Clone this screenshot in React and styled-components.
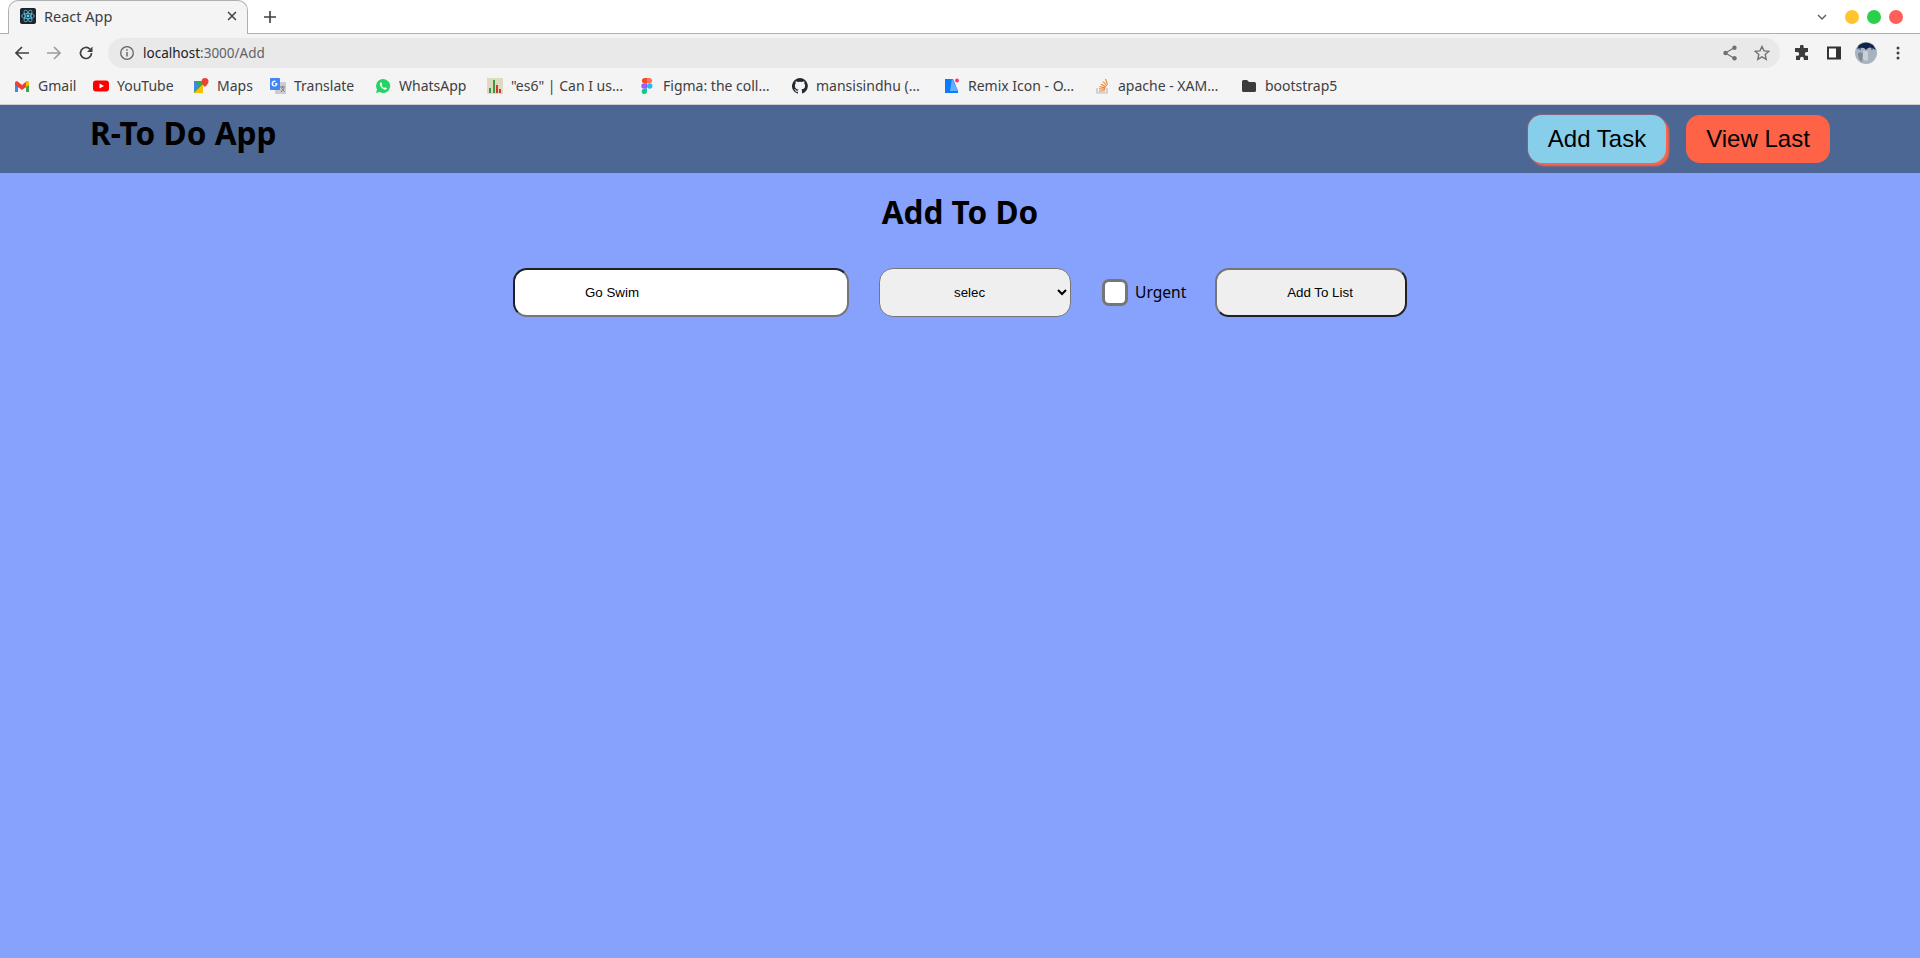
import React from "react";
import styled, { createGlobalStyle } from "styled-components";

const uiFont = `"Noto Sans", "Open Sans", sans-serif`;
const webFont = `"Liberation Sans", Arial, sans-serif`;

const GlobalStyle = createGlobalStyle`
  html, body { margin: 0; padding: 0; background: #87a2fc; }
  * { box-sizing: border-box; }
`;

const Page = styled.div`
  display: flex;
  flex-direction: column;
  height: 958px;
  overflow: hidden;
  background: #87a2fc;
`;

/* browser chrome */
const TitleBar = styled.div`
  display: flex;
  align-items: flex-start;
  height: 34px;
  padding-left: 8px;
  background: #fff;
  border-bottom: 1px solid #b0b0b0;
`;

const Tab = styled.div`
  position: relative;
  display: flex;
  align-items: center;
  width: 240px;
  height: 34px;
  padding: 0 8px 3px 11px;
  background: #f4f4f4;
  border: 1px solid #b0b0b0;
  border-bottom: none;
  border-radius: 10px 10px 0 0;
  font: 14.5px ${uiFont};
  color: #3c4043;
`;

const TabFavicon = styled.svg`
  width: 16px;
  height: 16px;
  flex: none;
  margin-right: 8px;
`;

const TabTitle = styled.span`
  flex: 1;
`;

const TabClose = styled.svg`
  width: 14px;
  height: 14px;
  flex: none;
`;

const NewTab = styled.svg`
  width: 14px;
  height: 14px;
  margin: 10px 0 0 15px;
`;

const WindowControls = styled.div`
  display: flex;
  align-items: center;
  gap: 8px;
  height: 33px;
  margin-left: auto;
  padding-right: 17px;
`;

const Dot = styled.span`
  width: 14px;
  height: 14px;
  border-radius: 50%;
  background: ${(p) => p.$color};
`;

const Chevron = styled.svg`
  width: 12px;
  height: 12px;
  margin-right: 9px;
`;

const Toolbar = styled.div`
  display: flex;
  align-items: center;
  height: 38px;
  padding: 4px 0 4px 14px;
  background: #f4f4f4;
`;

const NavIcon = styled.svg`
  width: 16px;
  height: 16px;
  flex: none;
  margin-right: 16px;
`;

const Omnibox = styled.div`
  display: flex;
  align-items: center;
  width: 1672px;
  height: 30px;
  margin-left: -2px;
  padding: 0 10px 0 11px;
  border-radius: 15px;
  background: #e9e9e9;
  font: 13.5px ${uiFont};
  color: #202124;
`;

const UrlMuted = styled.span`
  color: #5f6368;
`;

const Url = styled.div`
  flex: 1;
  margin-left: 8px;
`;

const OmniIcon = styled.svg`
  width: 16px;
  height: 16px;
  flex: none;
  margin-left: ${(p) => p.$gap || 0}px;
`;

const ToolIcons = styled.div`
  display: flex;
  align-items: center;
  margin-left: 14px;
`;

const ToolIcon = styled.svg`
  width: ${(p) => p.$size || 16}px;
  height: ${(p) => p.$size || 16}px;
  flex: none;
  margin-right: ${(p) => p.$gap}px;
`;

const BookmarksBar = styled.div`
  display: flex;
  align-items: center;
  gap: 16px;
  height: 33px;
  padding: 0 0 5px 14px;
  background: #f4f4f4;
  border-bottom: 1px solid #d0d0d0;
`;

const Bookmark = styled.div`
  display: flex;
  align-items: center;
  gap: 8px;
  font: 14px ${uiFont};
  color: #3c4043;
  white-space: nowrap;
`;

const BookmarkLabel = styled.span`
  display: block;
  width: ${(p) => p.$w}px;
  overflow: hidden;
`;

const Favicon = styled.svg`
  width: 16px;
  height: 16px;
  flex: none;
`;

/* the app */
const Header = styled.header`
  display: flex;
  justify-content: space-between;
  align-items: flex-start;
  height: 68px;
  padding: 9px 90px 0 90px;
  background: #4c6793;
`;

const Brand = styled.h1`
  margin: 0;
  font: bold 31.6px/38px ${uiFont};
  color: #000;
`;

const Nav = styled.nav`
  display: flex;
  gap: 20px;
  margin-top: 1px;
`;

const NavButton = styled.button`
  width: ${(p) => p.$w}px;
  height: 48px;
  padding: 0;
  border: none;
  border-radius: 14px;
  background: ${(p) => (p.$active ? "skyblue" : "tomato")};
  box-shadow: ${(p) => (p.$active ? "3px 3px 2px tomato, 0 0 2px tomato" : "none")};
  font: 24px ${webFont};
  color: #000;
`;

const Main = styled.main`
  display: flex;
  flex-direction: column;
  align-items: center;
  padding-top: 18px;
`;

const Heading = styled.h2`
  margin: 0 0 35px;
  font: bold 31.5px/42px ${uiFont};
  color: #000;
`;

const Form = styled.form`
  display: flex;
  align-items: center;
`;

const TextInput = styled.input`
  width: 336px;
  height: 49px;
  padding: 0 0 0 70px;
  border: 2px inset #767676;
  border-radius: 14px;
  background: #fff;
  font: 13.33px ${webFont};
  color: #000;
  outline: none;
`;

const Select = styled.select`
  width: 192px;
  height: 49px;
  margin-left: 30px;
  padding-left: 70px;
  border: 1px solid #767676;
  border-radius: 14px;
  background: #efefef;
  font: 13.33px ${webFont};
  color: #000;
`;

const Check = styled.input`
  appearance: none;
  width: 26px;
  height: 27px;
  margin: 0 0 0 31px;
  border: 3px solid #767676;
  border-radius: 7px;
  background: #fff;
`;

const CheckLabel = styled.label`
  width: 51px;
  margin-left: 7px;
  padding-bottom: 2px;
  font: 15.6px ${uiFont};
  color: #000;
  white-space: nowrap;
`;

const Submit = styled.button`
  width: 192px;
  height: 49px;
  margin-left: 29px;
  padding: 0 0 0 18px;
  border: 2px outset #767676;
  border-radius: 14px;
  background: #efefef;
  font: 13.33px ${webFont};
  color: #000;
`;

const bookmarks = [
  {
    label: "Gmail", w: 39,
    icon: (
      <>
        <path d="M1 4v10h3V7z" fill="#4285f4" />
        <path d="M15 4v10h-3V7z" fill="#34a853" />
        <path d="M1 4l2-1 5 4 5-4 2 1v3l-7 5-7-5z" fill="#ea4335" />
        <path d="M12 4l1-1 2 1v3l-3 2z" fill="#fbbc04" />
      </>
    ),
  },
  {
    label: "YouTube", w: 60,
    icon: (
      <>
        <rect x="0" y="2.500" width="16" height="11" rx="3" fill="#f00" />
        <path d="M6.500 5.500v5l4.500-2.500z" fill="#fff" />
      </>
    ),
  },
  {
    label: "Maps", w: 37,
    icon: (
      <>
        <path d="M1 3h9v12H1z" fill="#34a853" />
        <path d="M1 15l9-9v9z" fill="#fbbc04" />
        <path d="M1 3l5 5-5 5z" fill="#4285f4" />
        <path d="M12 0a3.500 3.500 0 0 0-3.500 3.500C8.500 6 12 9 12 9s3.500-3 3.500-5.500A3.500 3.500 0 0 0 12 0z" fill="#ea4335" />
      </>
    ),
  },
  {
    label: "Translate", w: 65,
    icon: (
      <>
        <rect x="5" y="4" width="11" height="12" rx="1" fill="#c8ccd2" />
        <rect x="0" y="0" width="10" height="12" rx="1" fill="#4285f4" />
        <path d="M7 5H5v1.500h1.200A1.700 1.700 0 1 1 5 4l1-1A3 3 0 1 0 7.500 6z" fill="#fff" />
        <path d="M10 9h5M12.500 8v1.500M11 14l3-4M11.500 10.500l3 3" stroke="#777" fill="none" />
      </>
    ),
  },
  {
    label: "WhatsApp", w: 72,
    icon: (
      <>
        <path d="M8 1a7 7 0 0 0-6 10.500L1 15l3.600-1A7 7 0 1 0 8 1z" fill="#25d366" />
        <path d="M5.500 4.500C4.500 5.500 4.500 7 6 9s3.500 3 5 2.500l1-1.300-2-1-.8.800C8 9.500 7 8.500 6.500 7.300l.8-.8-.8-2z" fill="#fff" />
      </>
    ),
  },
  {
    label: "\"es6\" | Can I us…", w: 112,
    icon: (
      <>
        <rect width="16" height="16" fill="#dfd9c2" />
        <path d="M2 15v-5h2v5zM6 15V2h2v13z" fill="#3a9b43" />
        <path d="M9 15V7h2v8zM12 15v-4h2v4z" fill="#d5372c" />
      </>
    ),
  },
  {
    label: "Figma: the coll…", w: 113,
    icon: (
      <>
        <path d="M8 0H5a2.700 2.700 0 0 0 0 5.300h3z" fill="#f24e1e" />
        <path d="M8 0h3a2.700 2.700 0 0 1 0 5.300H8z" fill="#ff7262" />
        <path d="M8 5.300H5a2.700 2.700 0 0 0 0 5.400h3z" fill="#a259ff" />
        <circle cx="10.700" cy="8" r="2.700" fill="#1abcfe" />
        <path d="M8 10.700H5A2.700 2.700 0 1 0 8 13.300z" fill="#0acf83" />
      </>
    ),
  },
  {
    label: "mansisindhu (…", w: 112,
    icon: (
      <path
        d="M8 0a8 8 0 0 0-2.500 15.600c.4.100.5-.2.500-.4v-1.400c-2.200.5-2.700-1-2.700-1-.4-.9-.9-1.200-.9-1.200-.7-.5.100-.5.100-.5.800.1 1.200.8 1.200.8.700 1.200 1.900.9 2.300.7.100-.5.300-.9.500-1.100-1.800-.2-3.600-.9-3.600-4 0-.9.300-1.600.8-2.100-.1-.2-.4-1 .1-2.100 0 0 .7-.2 2.200.8a7.600 7.600 0 0 1 4 0c1.500-1 2.200-.8 2.200-.8.400 1.100.2 1.900.1 2.100.5.600.8 1.300.8 2.100 0 3.100-1.900 3.700-3.700 3.900.3.300.6.700.6 1.500v2.200c0 .2.100.5.600.4A8 8 0 0 0 8 0z"
        fill="#24292f"
      />
    ),
  },
  {
    label: "Remix Icon - O…", w: 110,
    icon: (
      <>
        <path d="M1 1h8l5 12v2H1z" fill="#0a7cff" />
        <path d="M8 1l6 12H6z" fill="#66b1ff" />
        <circle cx="13" cy="2.500" r="2" fill="#ff3a5e" />
      </>
    ),
  },
  {
    label: "apache - XAM…", w: 107,
    icon: (
      <>
        <path d="M3 10v5h10v-5" stroke="#bcbbbb" strokeWidth="1.200" fill="none" />
        <path d="M5 13h6M5 10.800l6 .6M5.500 8.500l6 1.600M7 6l5 3M9 3.500l4 4.500M11.500 1l2 5.500" stroke="#f48024" strokeWidth="1.100" fill="none" />
      </>
    ),
  },
  {
    label: "bootstrap5", w: 78,
    icon: <path d="M1 3.500A1.500 1.500 0 0 1 2.500 2H6l2 2h5.500A1.500 1.500 0 0 1 15 5.500v7a1.500 1.500 0 0 1-1.500 1.500h-11A1.500 1.500 0 0 1 1 12.500z" fill="#3c3c3c" />,
  },
];

export default function App() {
  return (
    <Page>
      <GlobalStyle />
      <TitleBar>
        <Tab>
          <TabFavicon viewBox="0 0 16 16">
            <rect width="16" height="16" rx="2" fill="#20232a" />
            <circle cx="8" cy="8" r="1.400" fill="#61dafb" />
            <g fill="none" stroke="#61dafb" strokeWidth="0.7">
              <ellipse cx="8" cy="8" rx="6.500" ry="2.600" />
              <ellipse cx="8" cy="8" rx="6.500" ry="2.600" transform="rotate(60 8 8)" />
              <ellipse cx="8" cy="8" rx="6.500" ry="2.600" transform="rotate(120 8 8)" />
            </g>
          </TabFavicon>
          <TabTitle>React App</TabTitle>
          <TabClose viewBox="0 0 16 16">
            <path d="M3.500 3.500l9 9M12.500 3.500l-9 9" stroke="#3c4043" strokeWidth="1.700" />
          </TabClose>
        </Tab>
        <NewTab viewBox="0 0 14 14">
          <path d="M7 1v12M1 7h12" stroke="#3c4043" strokeWidth="1.600" />
        </NewTab>
        <WindowControls>
          <Chevron viewBox="0 0 12 12">
            <path d="M2 4l4 4 4-4" fill="none" stroke="#5f6368" strokeWidth="1.500" />
          </Chevron>
          <Dot $color="#ffc42e" />
          <Dot $color="#2bd04a" />
          <Dot $color="#ff5f57" />
        </WindowControls>
      </TitleBar>

      <Toolbar>
        <NavIcon viewBox="0 0 16 16">
          <path d="M15 8H2M8 2L2 8l6 6" fill="none" stroke="#3c4043" strokeWidth="1.700" />
        </NavIcon>
        <NavIcon viewBox="0 0 16 16">
          <path d="M1 8h13M8 2l6 6-6 6" fill="none" stroke="#9a9c9f" strokeWidth="1.700" />
        </NavIcon>
        <NavIcon viewBox="0 0 16 16">
          <path d="M13.500 8a5.500 5.500 0 1 1-1.600-3.900" fill="none" stroke="#3c4043" strokeWidth="1.700" />
          <path d="M14.500 1.500V7H9z" fill="#3c4043" />
        </NavIcon>
        <Omnibox>
          <OmniIcon viewBox="0 0 16 16">
            <circle cx="8" cy="8" r="6.300" fill="none" stroke="#5f6368" strokeWidth="1.300" />
            <path d="M7.300 7h1.400v4.500H7.300zM7.300 4.300h1.400v1.400H7.300z" fill="#5f6368" />
          </OmniIcon>
          <Url>
            localhost<UrlMuted>:3000/Add</UrlMuted>
          </Url>
          <OmniIcon viewBox="0 0 16 16">
            <path d="M12.500 2.500L3.500 8l9 5.500" fill="none" stroke="#6e7276" strokeWidth="1.200" />
            <circle cx="12.500" cy="2.800" r="2.200" fill="#6e7276" />
            <circle cx="3.500" cy="8" r="2.200" fill="#6e7276" />
            <circle cx="12.500" cy="13.200" r="2.200" fill="#6e7276" />
          </OmniIcon>
          <OmniIcon viewBox="0 0 16 16" $gap={16}>
            <path d="M8 1.500l2 4.400 4.800.5-3.600 3.200 1 4.700L8 11.900l-4.200 2.400 1-4.700L1.200 6.400 6 5.900z" fill="none" stroke="#6e7276" strokeWidth="1.400" />
          </OmniIcon>
        </Omnibox>
        <ToolIcons>
          <ToolIcon viewBox="0 0 16 16" $gap={16}>
            <path d="M6 1.500a1.800 1.800 0 0 1 3.600 0V3H14v4h-1.300a1.900 1.900 0 0 0 0 3.800H14V15H9.800v-1.300a1.900 1.900 0 0 0-3.800 0V15H2v-4.200h1.300a1.900 1.900 0 0 0 0-3.800H1V3h5z" fill="#3c3c3c" />
          </ToolIcon>
          <ToolIcon viewBox="0 0 16 16" $gap={13}>
            <path d="M2 2.500h12v11H2z" fill="#fff" stroke="#333" strokeWidth="2" />
            <path d="M10 2.500h4v11h-4z" fill="#333" />
          </ToolIcon>
          <ToolIcon viewBox="0 0 22 22" $gap={13} $size={22}>
            <circle cx="11" cy="11" r="11" fill="#a9b3bf" />
            <path d="M4 3 Q11 -2 18 3 L21 8 Q14 3 11 8 Q9 4 2 7Z" fill="#10254a" />
            <path d="M8 9 Q11 8 13 10 L13 18 Q10 20 8 17Z" fill="#c9d0d8" />
            <path d="M3 11 Q6 10 8 11 L7 20 Q4 18 3 14Z" fill="#7e8a97" />
            <circle cx="5" cy="7" r="1" fill="#2e5fa8" />
            <circle cx="17" cy="7" r="1" fill="#2e5fa8" />
          </ToolIcon>
          <ToolIcon viewBox="0 0 16 16" $gap={0}>
            <circle cx="8" cy="3" r="1.500" fill="#3c4043" />
            <circle cx="8" cy="8" r="1.500" fill="#3c4043" />
            <circle cx="8" cy="13" r="1.500" fill="#3c4043" />
          </ToolIcon>
        </ToolIcons>
      </Toolbar>

      <BookmarksBar>
        {bookmarks.map((item) => (
          <Bookmark key={item.label}>
            <Favicon viewBox="0 0 16 16">{item.icon}</Favicon>
            <BookmarkLabel $w={item.w}>{item.label}</BookmarkLabel>
          </Bookmark>
        ))}
      </BookmarksBar>

      <Header>
        <Brand>R-To Do App</Brand>
        <Nav>
          <NavButton $active $w={138}>Add Task</NavButton>
          <NavButton $w={144}>View Last</NavButton>
        </Nav>
      </Header>

      <Main>
        <Heading>Add To Do</Heading>
        <Form>
          <TextInput type="text" defaultValue="Go Swim" />
          <Select defaultValue="selec">
            <option value="selec">selec</option>
          </Select>
          <Check type="checkbox" id="urgent" />
          <CheckLabel htmlFor="urgent">Urgent</CheckLabel>
          <Submit type="button">Add To List</Submit>
        </Form>
      </Main>
    </Page>
  );
}
